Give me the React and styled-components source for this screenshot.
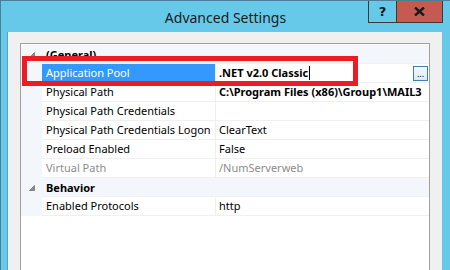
import React from "react";
import styled, { createGlobalStyle } from "styled-components";

const rows = [
  { category: true, label: "(General)" },
  { label: "Application Pool", value: ".NET v2.0 Classic", bold: true, selected: true, editing: true },
  { label: "Physical Path", value: "C:\\Program Files (x86)\\Group1\\MAIL3", bold: true },
  { label: "Physical Path Credentials", value: "" },
  { label: "Physical Path Credentials Logon", value: "ClearText" },
  { label: "Preload Enabled", value: "False" },
  { label: "Virtual Path", value: "/NumServerweb", disabled: true },
  { category: true, label: "Behavior" },
  { label: "Enabled Protocols", value: "http" },
];

const App = () => {
  return (
    <>
      <GlobalStyle />
      <Window>
        <TitleBar>
          <span />
          <Title>Advanced Settings</Title>
          <CaptionButtons>
            <HelpButton>?</HelpButton>
            <CloseButton>
              <svg width="11" height="9" viewBox="0 0 11 9">
                <path d="M1 0.5 L10 8.5 M10 0.5 L1 8.5" stroke="#1a1a1a" strokeWidth="2.4" />
              </svg>
            </CloseButton>
          </CaptionButtons>
        </TitleBar>
        <Client>
          <PropertyGrid>
            {rows.map((row) =>
              row.category ? (
                <CategoryRow key={row.label}>
                  <Gutter>
                    <svg width="6" height="6" viewBox="0 0 6 6">
                      <polygon points="5.5,0.5 5.5,5.5 0.5,5.5" fill="#8a8a8a" stroke="#5a5a5a" strokeWidth="0.6" />
                    </svg>
                  </Gutter>
                  <CategoryLabel>{row.label}</CategoryLabel>
                </CategoryRow>
              ) : (
                <Row key={row.label}>
                  <Gutter />
                  <NameCell $selected={row.selected} $disabled={row.disabled}>
                    {row.label}
                  </NameCell>
                  <ValueCell $bold={row.bold} $disabled={row.disabled}>
                    <ValueText>
                      {row.value}
                      {row.editing && <Caret />}
                    </ValueText>
                    {row.editing && <EllipsisButton>...</EllipsisButton>}
                  </ValueCell>
                </Row>
              )
            )}
          </PropertyGrid>
        </Client>
        <Highlight />
      </Window>
    </>
  );
};

export default App;

const GlobalStyle = createGlobalStyle`
  html, body {
    margin: 0;
    padding: 0;
    background: #ffffff;
  }
  body {
    font-family: "Noto Sans", "Open Sans", sans-serif;
  }
`;

const Window = styled.div`
  position: relative;
  width: 450px;
  height: 270px;
  box-sizing: border-box;
  display: flex;
  flex-direction: column;
  background-color: #67c9ea;
  border-left: 1px solid #4d7f94;
  border-top: 1px solid #4d7f94;
  overflow: hidden;
`;

const TitleBar = styled.div`
  height: 31px;
  display: grid;
  grid-template-columns: 1fr auto 1fr;
  padding: 0 7px;
`;

const Title = styled.div`
  font-family: "Noto Sans", sans-serif;
  font-size: 14px;
  color: #1b1b1b;
  line-height: 31px;
  padding-top: 1px;
`;

const CaptionButtons = styled.div`
  display: flex;
  justify-content: flex-end;
  align-items: flex-start;
  margin-top: -1px;
`;

const HelpButton = styled.div`
  width: 27px;
  height: 21px;
  box-sizing: content-box;
  border: 1px solid #3a3a3a;
  border-right: none;
  display: flex;
  align-items: center;
  justify-content: center;
  font-family: "DejaVu Sans", sans-serif;
  font-weight: 700;
  font-size: 13px;
  color: #111;
`;

const CloseButton = styled.div`
  width: 45px;
  height: 21px;
  border: 1px solid #3a3a3a;
  background-color: #c75a50;
  display: flex;
  align-items: center;
  justify-content: center;
`;

const Client = styled.div`
  flex: 1;
  margin: 0 8px 0 6px;
  background-color: #f0f0f0;
  border-left: 1px solid #55a3c2;
  padding: 11px 12px 0 12px;
  display: flex;
`;

const PropertyGrid = styled.div`
  flex: 1;
  background-color: #ffffff;
  border: 1px solid #a0a0a0;
  border-bottom: none;
  padding-top: 1px;
  font-size: 11px;
  color: #000;
`;

const Row = styled.div`
  display: grid;
  grid-template-columns: 21px 174px 1fr;
  height: 19px;
`;

const CategoryRow = styled.div`
  display: grid;
  grid-template-columns: 21px 1fr;
  height: 19px;
  background-color: #f3f6fb;
  border-bottom: 1px solid #eef1f6;
  box-sizing: border-box;
`;

const Gutter = styled.div`
  background-color: #f3f6fb;
  display: flex;
  align-items: center;
  justify-content: flex-end;
  padding-right: 7px;
`;

const CategoryLabel = styled.div`
  font-weight: 700;
  padding-left: 4px;
  line-height: 19px;
`;

const NameCell = styled.div`
  box-sizing: border-box;
  padding-left: 4px;
  line-height: 18px;
  white-space: nowrap;
  overflow: hidden;
  border-bottom: 1px solid ${(p) => (p.$selected ? "#3399ff" : "#f0f0f0")};
  border-right: 1px solid #f0f0f0;
  background-color: ${(p) => (p.$selected ? "#3399ff" : "#ffffff")};
  color: ${(p) => (p.$selected ? "#ffffff" : p.$disabled ? "#8d8d8d" : "#000000")};
`;

const ValueCell = styled.div`
  box-sizing: border-box;
  display: flex;
  align-items: center;
  padding-left: 3px;
  border-bottom: 1px solid #f0f0f0;
  font-weight: ${(p) => (p.$bold ? 700 : 400)};
  color: ${(p) => (p.$disabled ? "#8d8d8d" : "#000000")};
  white-space: nowrap;
  overflow: hidden;
`;

const ValueText = styled.span`
  flex: 1;
  display: flex;
  align-items: center;
  line-height: 18px;
`;

const Caret = styled.span`
  display: inline-block;
  width: 1px;
  height: 14px;
  background-color: #000;
  margin-left: 1px;
`;

const EllipsisButton = styled.div`
  width: 13px;
  height: 13px;
  border: 1px solid #3c7fb1;
  background: linear-gradient(#f4f9fd, #d8e9f7);
  font-size: 9px;
  font-weight: 400;
  line-height: 14px;
  text-align: center;
  color: #000;
  margin-right: 1px;
`;

const Highlight = styled.div`
  position: absolute;
  left: 21px;
  top: 55px;
  width: 336px;
  height: 30px;
  box-sizing: border-box;
  border: 5px solid #ed1c24;
  pointer-events: none;
`;
